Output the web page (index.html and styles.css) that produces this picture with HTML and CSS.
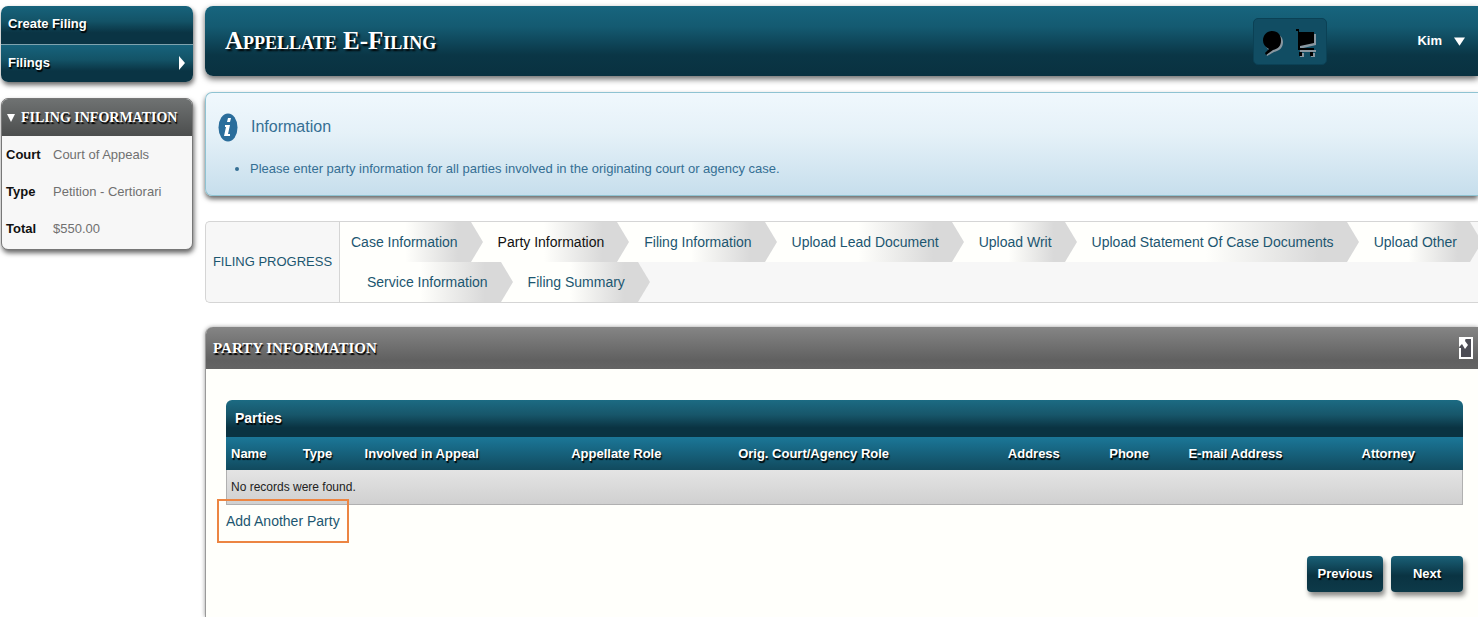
FILE: index.html
```html
<!DOCTYPE html>
<html lang="en">
<head>
    <meta charset="UTF-8">
    <meta name="viewport" content="width=device-width, initial-scale=1.0">
    <title>Appellate E-Filing</title>
    <link rel="stylesheet" href="styles.css">
</head>
<body>

<div class="page">

    <aside class="sidebar">
        <nav class="side-menu">
            <a href="#">Create Filing</a>
            <a href="#">Filings
                <svg class="menu-arrow" width="6" height="14" viewBox="0 0 6 14"><path d="M0 0L6 7L0 14Z"/></svg>
            </a>
        </nav>

        <section class="side-panel">
            <h2>
                <svg width="8" height="8" viewBox="0 0 8 8"><path d="M0 0H8L4 8Z"/></svg>
                FILING INFORMATION
            </h2>
            <dl>
                <dt>Court</dt><dd>Court of Appeals</dd>
                <dt>Type</dt><dd>Petition - Certiorari</dd>
                <dt>Total</dt><dd>$550.00</dd>
            </dl>
        </section>
    </aside>

    <main class="main">
        <header class="top-bar">
            <h1>Appellate E-Filing</h1>
            <div class="tools">
                <button type="button" aria-label="Messages">
                    <svg width="22" height="28" viewBox="0 0 22 28">
                        <path class="icon-shade" d="M11 4C17 4 21 8 21 13C21 19 17 22 12 23L5 27L4 24L8 22C5 20 3 17 3 13C3 8 6 4 11 4Z"/>
                        <path d="M10 2C16 2 19 6 19 11.500C19 17 16 20 11 21L4 26L3 24L7 20C3 18 1 15 1 11.500C1 6 5 2 10 2Z"/>
                    </svg>
                </button>
                <button type="button" aria-label="Cart">
                    <svg width="22" height="28" viewBox="0 0 22 28">
                        <path class="icon-shade" d="M4 5H20V16L5 19.500V21H20V23H4ZM4 24H8V28H4ZM15 24H19V28H15Z"/>
                        <path d="M0 0H3V3H18V14L4 17V19H18V21H2V2H0ZM3 23H6V27H3ZM14 23H17V27H14Z"/>
                    </svg>
                </button>
            </div>
            <button type="button" class="user">Kim
                <svg width="11" height="9" viewBox="0 0 12 9"><path d="M0 0H12L6 9Z"/></svg>
            </button>
        </header>

        <section class="info">
            <h2>
                <svg width="20" height="29" viewBox="0 0 20 29">
                    <ellipse cx="10" cy="14.500" rx="9.500" ry="14"/>
                    <path class="info-mark" d="M10 5H13L12 9H9ZM7 12H12L10 21H12V23H6L8 14H7Z"/>
                </svg>
                Information
            </h2>
            <ul>
                <li>Please enter party information for all parties involved in the originating court or agency case.</li>
            </ul>
        </section>

        <nav class="progress">
            <div class="progress-title">FILING PROGRESS</div>
            <ol class="steps">
                <li><a href="#">Case Information</a></li>
                <li class="current"><a href="#">Party Information</a></li>
                <li><a href="#">Filing Information</a></li>
                <li><a href="#">Upload Lead Document</a></li>
                <li><a href="#">Upload Writ</a></li>
                <li><a href="#">Upload Statement Of Case Documents</a></li>
                <li><a href="#">Upload Other</a></li>
                <li><a href="#">Service Information</a></li>
                <li><a href="#">Filing Summary</a></li>
            </ol>
        </nav>

        <section class="panel">
            <div class="panel-head">
                <h2>PARTY INFORMATION</h2>
                <button type="button" aria-label="Restore">
                    <svg width="16" height="24" viewBox="0 0 16 24">
                        <path d="M2 3H15V23H2Z" fill="#4d4d55"/>
                        <path d="M7 2H14V22H2V12" fill="none" stroke="#fff" stroke-width="2"/>
                        <path d="M1 1H8L7 5L10 9L7 13L4 8L1 11Z" fill="#fff"/>
                    </svg>
                </button>
            </div>
            <div class="panel-body">
                <table class="parties">
                    <caption>Parties</caption>
                    <colgroup>
                        <col class="c-name"><col class="c-type"><col class="c-involved">
                        <col class="c-role"><col class="c-orig"><col class="c-address">
                        <col class="c-phone"><col class="c-email"><col class="c-attorney">
                    </colgroup>
                    <thead>
                        <tr>
                            <th>Name</th>
                            <th>Type</th>
                            <th>Involved in Appeal</th>
                            <th>Appellate Role</th>
                            <th>Orig. Court/Agency Role</th>
                            <th>Address</th>
                            <th>Phone</th>
                            <th>E-mail Address</th>
                            <th>Attorney</th>
                        </tr>
                    </thead>
                    <tbody>
                        <tr><td colspan="9">No records were found.</td></tr>
                    </tbody>
                </table>
                <a class="add-party" href="#">Add Another Party</a>
                <div class="actions">
                    <button type="button">Previous</button>
                    <button type="button">Next</button>
                </div>
            </div>
        </section>
    </main>

</div>

</body>
</html>
```
FILE: styles.css
```css
* {
    box-sizing: border-box;
}

body {
    margin: 0;
    background: #fff;
    color: #1c5670;
    font-family: "Liberation Sans", Arial, sans-serif;
    font-size: 13px;
    line-height: 20px;
    overflow-x: hidden;
}

h1, h2, ul, ol, dl, dd {
    margin: 0;
    padding: 0;
}

a {
    color: inherit;
    text-decoration: none;
}

button {
    font: inherit;
    color: inherit;
    background: none;
    border: none;
    padding: 0;
    cursor: pointer;
}

svg {
    display: block;
    flex: none;
}

.page {
    display: flex;
    gap: 12px;
    min-height: 100vh;
    padding: 6px 0 0 1px;
}

/* Left column */
.sidebar {
    flex: 0 0 192px;
}

.side-menu {
    border-radius: 7px;
    overflow: hidden;
    box-shadow: 1px 3px 5px rgba(0, 0, 0, 0.6);
}

.side-menu a {
    display: flex;
    align-items: center;
    justify-content: space-between;
    height: 38px;
    padding: 0 8px 2px 7px;
    color: #fff;
    font-weight: bold;
    text-shadow: 1px 2px 1px #000;
    background: linear-gradient(#17637c, #135367 40%, #0a3444 70%, #0a3444);
}

.side-menu a + a {
    border-top: 1px solid #7fa3ae;
}

.menu-arrow {
    fill: #fff;
}

.side-panel {
    margin-top: 16px;
    border: 1px solid #777;
    border-radius: 7px;
    overflow: hidden;
    background: #f7f7f7;
    box-shadow: 1px 3px 5px rgba(0, 0, 0, 0.6);
}

.side-panel h2 {
    display: flex;
    align-items: center;
    gap: 6px;
    height: 37px;
    padding-left: 5px;
    color: #fff;
    font-family: "Liberation Serif", serif;
    font-size: 14px;
    white-space: nowrap;
    text-shadow: 1px 2px 1px #000;
    background: linear-gradient(#6f7272, #4c4e4e);
}

.side-panel svg {
    fill: #fff;
}

.side-panel dl {
    display: grid;
    grid-template-columns: 47px 1fr;
    grid-auto-rows: 37px;
    align-items: center;
    padding: 0 0 2px 4px;
}

.side-panel dt {
    color: #111;
    font-weight: bold;
}

.side-panel dd {
    color: #707070;
}

/* Right column */
.main {
    flex: 1;
    min-width: 0;
    display: flex;
    flex-direction: column;
}

.top-bar {
    display: flex;
    align-items: center;
    height: 70px;
    padding: 0 13px 0 20px;
    border-radius: 8px 0 0 8px;
    color: #fff;
    background: linear-gradient(#17657e, #145a71 30%, #0a3646 70%, #093140);
    box-shadow: 0 3px 6px rgba(0, 0, 0, 0.6);
}

.top-bar h1 {
    flex: 1;
    font-family: "Liberation Serif", serif;
    font-size: 25px;
    font-variant: small-caps;
    line-height: 32px;
    text-shadow: 2px 2px 2px #000;
}

.tools {
    display: flex;
    gap: 12px;
    height: 47px;
    margin-right: 90px;
    padding: 10px 8px;
    border: 1px solid #0b4155;
    border-radius: 5px;
    background: #114d63;
}

.tools .icon-shade {
    fill: #8997a0;
}

.user {
    display: flex;
    align-items: center;
    gap: 12px;
    font-weight: bold;
}

.user svg {
    fill: #fff;
}

.info {
    height: 104px;
    margin-top: 16px;
    padding: 20px 12px;
    border: 1px solid #8fc3d2;
    border-right: none;
    border-radius: 7px 0 0 7px;
    color: #356f94;
    background: linear-gradient(#f0f8fd, #e5f1f8 40%, #c6deec);
    box-shadow: 0 3px 5px rgba(0, 0, 0, 0.6);
}

.info h2 {
    display: flex;
    align-items: center;
    gap: 13px;
    height: 28px;
    font-size: 16px;
    font-weight: normal;
}

.info ellipse {
    fill: #2a6d9b;
}

.info-mark {
    fill: #fff;
}

.info ul {
    margin-top: 18px;
    padding-left: 32px;
}

.progress {
    display: flex;
    margin-top: 25px;
    border: 1px solid #d5d5d5;
    border-right: none;
    border-radius: 5px 0 0 5px;
    background: #f7f7f7;
}

.progress-title {
    flex: 0 0 134px;
    display: flex;
    align-items: center;
    justify-content: center;
    border-right: 1px solid #d5d5d5;
    white-space: nowrap;
}

.steps {
    flex: 1;
    display: flex;
    flex-wrap: wrap;
    font-size: 14px;
    list-style: none;
}

.steps li {
    position: relative;
    height: 40px;
    padding: 0 13px 0 27px;
    line-height: 40px;
    white-space: nowrap;
    background: linear-gradient(to right, #fffffc 50%, #d9d9d9 90%);
}

.steps li:first-child {
    padding-left: 11px;
}

/* Arrow tip lies over the next step */
.steps li::after {
    content: "";
    position: absolute;
    z-index: 1;
    top: 0;
    left: 100%;
    border-style: solid;
    border-width: 20px 0 20px 12px;
    border-color: transparent transparent transparent #d9d9d9;
}

.steps .current {
    color: #111;
}

.panel {
    flex: 1;
    margin-top: 24px;
    border-left: 1px solid #999;
    border-radius: 8px 0 0 0;
    background: #fffffb;
    box-shadow: 0 0 4px rgba(0, 0, 0, 0.4);
}

.panel-head {
    display: flex;
    align-items: center;
    justify-content: space-between;
    height: 42px;
    padding: 0 4px 0 7px;
    border-radius: 7px 0 0 0;
    color: #fff;
    background: linear-gradient(#858585, #606060 80%, #646464);
}

.panel-head h2 {
    font-family: "Liberation Serif", serif;
    font-size: 15px;
    text-shadow: 1px 2px 1px #000;
}

.panel-body {
    padding: 31px 15px 24px 20px;
}

.parties {
    width: 100%;
    table-layout: fixed;
    border-collapse: separate;
    border-spacing: 0;
}

.parties caption {
    height: 37px;
    padding-left: 9px;
    border-radius: 6px 6px 0 0;
    color: #fff;
    font-size: 14px;
    font-weight: bold;
    line-height: 37px;
    text-align: left;
    text-shadow: 1px 2px 1px #000;
    background: linear-gradient(#1c6b83, #17566a 40%, #0a3342 75%, #0a3342);
}

.parties thead tr {
    background: linear-gradient(#1b7798, #114a5e);
}

.parties th {
    height: 33px;
    padding: 0 0 0 5px;
    color: #fff;
    text-align: left;
    white-space: nowrap;
    text-shadow: 1px 2px 1px #000;
}

.parties td {
    height: 35px;
    padding: 0 0 0 4px;
    border: 1px solid #b0b0b0;
    border-top: none;
    color: #222;
    font-size: 12px;
    background: linear-gradient(#e4e4e4, #d0d0d0);
}

.c-name { width: 5.8%; }
.c-type { width: 5%; }
.c-involved { width: 16.7%; }
.c-role { width: 13.5%; }
.c-orig { width: 21.8%; }
.c-address { width: 8.2%; }
.c-phone { width: 6.4%; }
.c-email { width: 14%; }
.c-attorney { width: 8.6%; }

.add-party {
    display: inline-block;
    margin-top: 3px;
    font-size: 14px;
    line-height: 26px;
    outline: 2px solid #ec8542;
    outline-offset: 8px;
    outline-offset: 7px;
}

.actions {
    display: flex;
    justify-content: flex-end;
    gap: 8px;
    margin-top: 22px;
}

.actions button {
    width: 72px;
    height: 36px;
    border-radius: 4px;
    color: #fff;
    font-weight: bold;
    text-shadow: 1px 2px 1px #000;
    background: linear-gradient(#1a6178, #0a3342 55%, #0d3a49);
    box-shadow: 2px 4px 5px rgba(0, 0, 0, 0.45);
}

.actions button:first-child {
    width: 76px;
}
```
